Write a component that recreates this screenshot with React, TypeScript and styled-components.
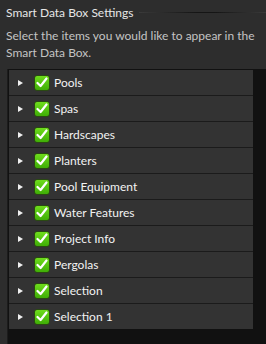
import { createGlobalStyle, styled } from "styled-components";

const items = [
  "Pools",
  "Spas",
  "Hardscapes",
  "Planters",
  "Pool Equipment",
  "Water Features",
  "Project Info",
  "Pergolas",
  "Selection",
  "Selection 1",
];

const GlobalStyle = createGlobalStyle`
  html, body {
    margin: 0;
    padding: 0;
    background: #2d2d2d;
    font-family: Lato, "Noto Sans", sans-serif;
  }
  #root {
    width: 266px;
    height: 344px;
    overflow: hidden;
  }
`;

export default function App() {
  return (
    <>
      <GlobalStyle />
      <Page>
        <Header>
          <Title>Smart Data Box Settings</Title>
          <Rule />
        </Header>
        <Desc>Select the items you would like to appear in the Smart Data Box.</Desc>
        <Panel>
          <List>
            {items.map((name) => (
              <Row key={name}>
                <Arrow />
                <Check>
                  <svg width="12" height="11" viewBox="0 0 12 11">
                    <path
                      d="M1.5 6 L4.6 9 L10.5 1.5"
                      fill="none"
                      stroke="#fff"
                      strokeWidth="2.2"
                      strokeLinecap="round"
                      strokeLinejoin="round"
                    />
                  </svg>
                </Check>
                <Label>{name}</Label>
              </Row>
            ))}
          </List>
        </Panel>
      </Page>
    </>
  );
}

const Page = styled.div`
  width: 266px;
  height: 344px;
  display: flex;
  flex-direction: column;
`;

const Header = styled.div`
  display: flex;
  align-items: center;
  gap: 6px;
  height: 24px;
  padding-left: 6px;
`;

const Title = styled.div`
  font-size: 12px;
  color: #e6e6e6;
  white-space: nowrap;
`;

const Rule = styled.div`
  flex: 1;
  height: 1px;
  margin-top: 1px;
  background: linear-gradient(to right, #3a3a3a, #151515 45%, #151515 60%, #3a3a3a);
`;

const Desc = styled.div`
  padding: 3px 6px 0 6px;
  font-size: 12px;
  line-height: 17px;
  color: #c4c4c4;
  height: 42px;
`;

const Panel = styled.div`
  flex: 1;
  margin-left: 7px;
  background: #111;
  padding: 1px 13px 0 1px;
  border-left: 1px solid #1c1c1c;
`;

const List = styled.div`
  display: flex;
  flex-direction: column;
`;

const Row = styled.div`
  height: 25px;
  background: #333;
  border-bottom: 1px solid #1b1b1b;
  display: flex;
  align-items: center;
  &:last-child {
    border-bottom: none;
  }
`;

const Arrow = styled.div`
  width: 0;
  height: 0;
  margin-left: 9px;
  border-top: 3.5px solid transparent;
  border-bottom: 3.5px solid transparent;
  border-left: 5px solid #f0f0f0;
`;

const Check = styled.div`
  width: 14px;
  height: 14px;
  margin-left: 11px;
  border: 1px solid #2a4a12;
  border-radius: 3px;
  background: linear-gradient(#6edc1c, #3fae06);
  display: flex;
  align-items: center;
  justify-content: center;
`;

const Label = styled.div`
  margin-left: 4px;
  font-size: 12px;
  color: #f2f2f2;
`;
